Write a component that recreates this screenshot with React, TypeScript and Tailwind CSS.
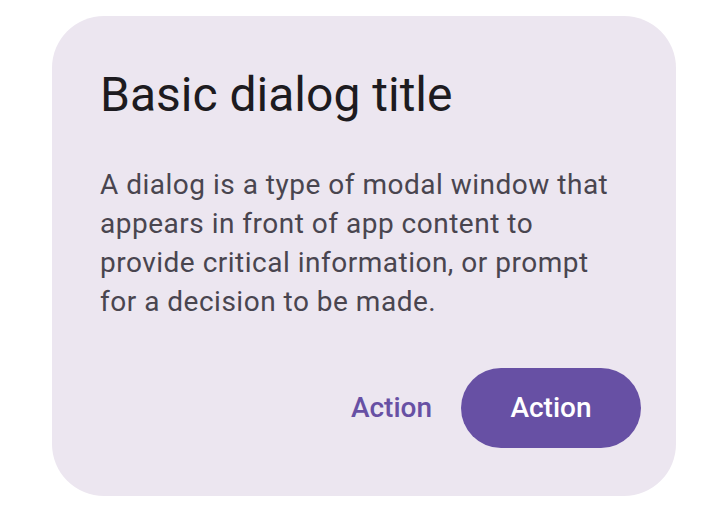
export default function App() {
  return (
    <div
      className="w-[726px] h-[514px] bg-white pt-4 pl-[52px]"
      style={{ fontFamily: "Roboto, 'Noto Sans', sans-serif" }}
    >
      <div className="w-[624px] h-[480px] rounded-[52px] bg-[#ece6f0] flex flex-col pl-12 pr-[35px] pt-[47px] pb-12">
        <div className="text-[48px] leading-[64px] text-[#1d1b20]">
          Basic dialog title
        </div>
        <div className="mt-[38px] w-[528px] text-[28px] leading-[39px] text-[#49454f] tracking-[0.5px]">
          A dialog is a type of modal window that appears in front of app
          content to provide critical information, or prompt for a decision to
          be made.
        </div>
        <div className="mt-auto flex flex-row items-center justify-end gap-[5px]">
          <button className="h-20 px-6 rounded-full text-[28px] font-medium text-[#6750a4]">
            Action
          </button>
          <button className="h-20 w-[180px] rounded-full bg-[#6750a4] text-[28px] font-medium text-white">
            Action
          </button>
        </div>
      </div>
    </div>
  );
}
